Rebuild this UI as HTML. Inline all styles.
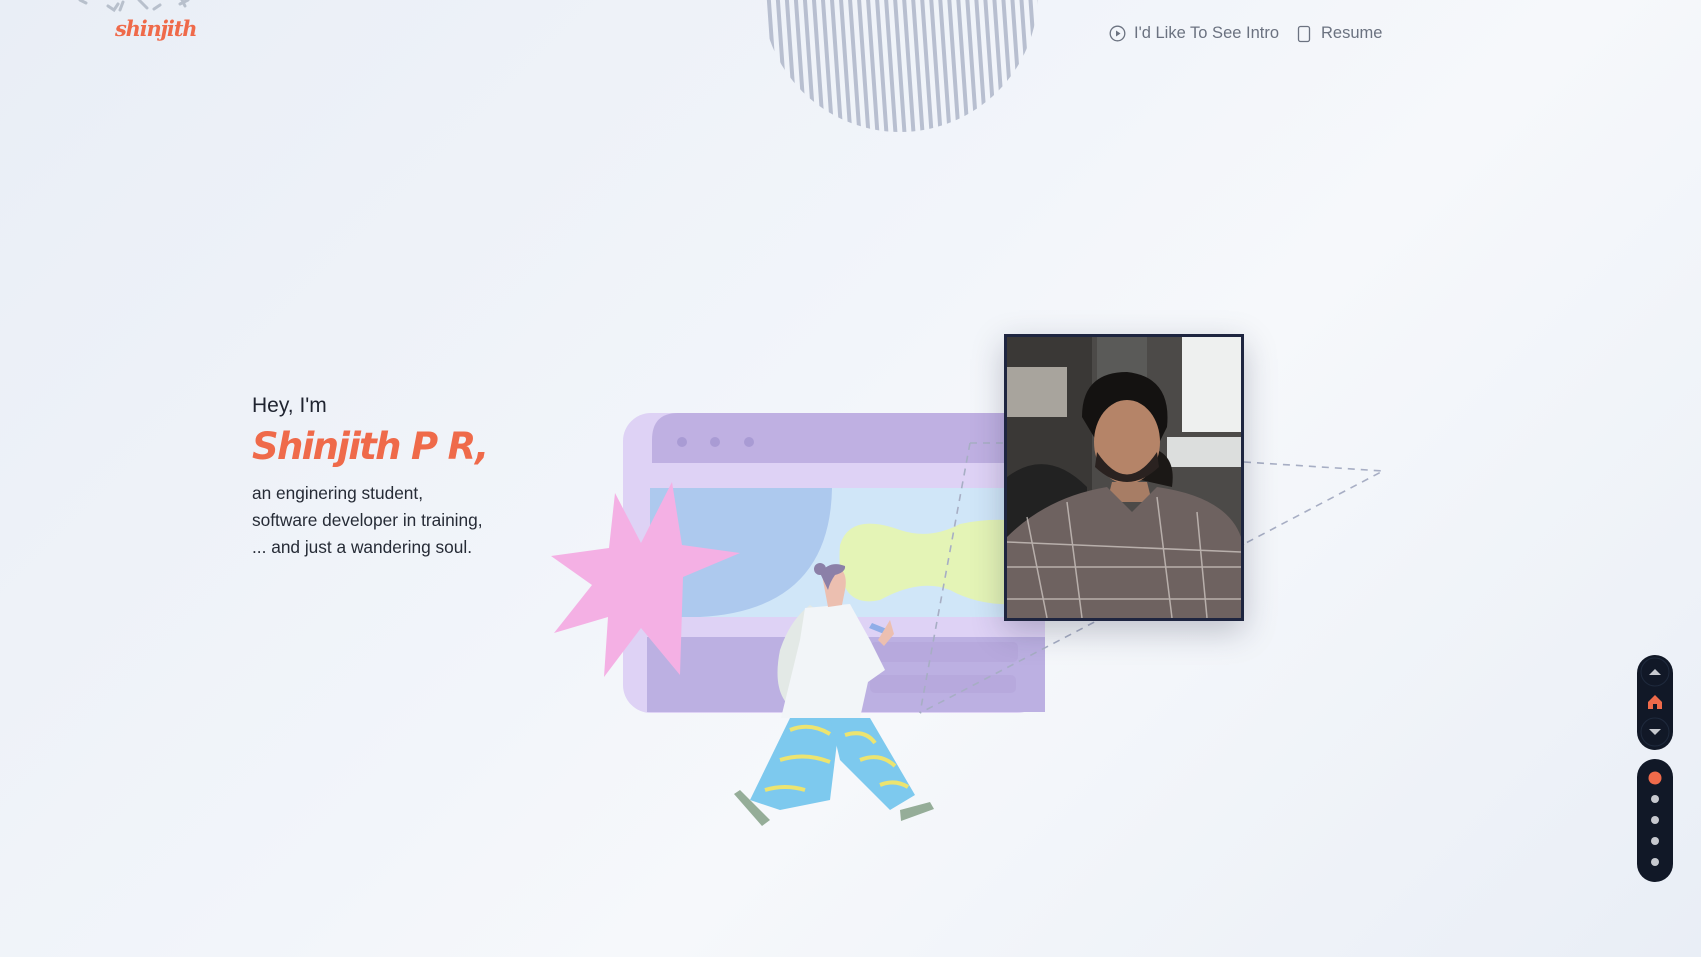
<!DOCTYPE html>
<html><head><meta charset="utf-8"><style>
html,body{margin:0;padding:0;width:1701px;height:957px;overflow:hidden;}
body{background:linear-gradient(135deg,#e9eef6 0%,#f2f5fa 45%,#f6f8fb 60%,#e9eef6 100%);font-family:"Liberation Sans","DejaVu Sans",sans-serif;position:relative;}
.logo{position:absolute;left:115px;top:16px;font-family:"DejaVu Serif","Liberation Serif",serif;font-style:italic;font-weight:bold;font-size:21px;color:#ef6a4a;letter-spacing:-1.2px}
.nav{position:absolute;top:24px;font-size:16.5px;color:#6b7280;display:flex;align-items:center;gap:8px}
.hey{position:absolute;left:252px;top:394px;font-size:21px;color:#1f2430}
.name{position:absolute;left:252px;top:425px;font-family:"DejaVu Sans",sans-serif;font-weight:bold;font-style:italic;font-size:37px;color:#ef6a4a;letter-spacing:-1.7px}
.body{position:absolute;left:252px;top:480px;font-size:17.3px;line-height:27px;color:#262b36}
.photo{position:absolute;left:1004px;top:334px;width:234px;height:281px;border:3px solid #1e2540;box-shadow:0 10px 30px rgba(30,37,64,.25);overflow:hidden;background:#5d5450}
.pill{position:absolute;left:1637px;width:36px;background:#111827;border-radius:18px}
</style></head><body>
<svg width="1701" height="957" style="position:absolute;left:0;top:0">
<defs>
<clipPath id="c"><circle cx="900" cy="-6" r="138"/></clipPath>
<pattern id="st" width="9" height="10" patternUnits="userSpaceOnUse" patternTransform="rotate(-4)"><rect width="4" height="10" fill="#b8bfd0"/></pattern>
</defs>
<rect x="760" y="-150" width="280" height="290" fill="url(#st)" clip-path="url(#c)"/>
<g stroke="#b8c0cc" stroke-width="3" fill="none" stroke-linecap="round">
<path d="M80 0l6 3M108 6l6 4 4-6M120 10l3-8M139 0l8 8M160 5l-6 4M180 4l8-4M182 0l3 6"/>
</g>
<rect x="623" y="413" width="422" height="300" rx="28" fill="#ded2f5"/>
<path d="M678 413H1045V463H652V440Q652 413 678 413Z" fill="#bfb0e2"/>
<rect x="650" y="488" width="395" height="129" fill="#d0e6f8"/>
<path d="M650 488H832Q830 610 700 617H650Z" fill="#adc9ee"/>
<path d="M840 545Q850 512 900 530Q930 540 960 524Q1000 515 1045 525V600Q990 612 950 590Q920 578 880 600Q835 610 840 545Z" fill="#e4f4b6"/>
<rect x="647" y="637" width="398" height="75" fill="#bcb0e2"/>
<rect x="870" y="642" width="148" height="20" rx="5" fill="#b7a9dd"/>
<rect x="870" y="675" width="146" height="18" rx="5" fill="#b7a9dd"/>
<circle cx="682" cy="442" r="5" fill="#a99bd4"/><circle cx="715" cy="442" r="5" fill="#a99bd4"/><circle cx="749" cy="442" r="5" fill="#a99bd4"/>
<path d="M672 482L682 545L740 553L683 577L680 675L641 628L604 677L608 617L554 633L592 585L551 556L609 548L615 493L641 543Z" fill="#f4b0e4"/>
<g stroke="#a7aec4" stroke-width="1.6" stroke-dasharray="7 6" fill="none">
<path d="M970 443L920 713M970 443H1004M1244 462L1383 471L1244 544M1244 544L920 713"/>
</g>
<path d="M810 605Q790 620 780 650Q770 700 800 713H860Q860 640 810 605Z" fill="#e3e9e6"/>
<path d="M805 608L850 604L870 640L885 670L868 682L860 718H781L800 640Z" fill="#f2f5f8"/>
<circle cx="820" cy="569" r="6" fill="#8b80a8"/>
<path d="M822 575Q825 565 840 568Q848 575 845 590L842 605L828 607Z" fill="#ecbfb0"/>
<path d="M820 573Q830 560 845 566Q846 572 835 575Q830 582 828 590Z" fill="#8b80a8"/>
<path d="M872 623l20 8l-3 5l-20-8Z" fill="#90aee8"/>
<path d="M878 640l12-20l4 14l-10 12Z" fill="#ecbfb0"/>
<path d="M790 718H840L830 800L780 810L750 800Z" fill="#7dc9ee"/>
<path d="M830 718H870L915 795L890 810L840 760Z" fill="#7dc9ee"/>
<g stroke="#ece470" stroke-width="4" fill="none"><path d="M790 730q20-8 40 4M780 760q25-8 50 2M765 790q20-6 40 0M845 735q20-6 30 8M860 760q20-8 35 6M880 785q15-6 28 2"/></g>
<path d="M740 790l30 30l-8 6l-28-32Z" fill="#95ad98"/>
<path d="M900 810l30-8l4 7l-33 12Z" fill="#95ad98"/>
</svg>
<div class="logo">shinjith</div>
<div class="nav" style="left:1109px"><svg width="17" height="17" viewBox="0 0 17 17"><circle cx="8.5" cy="8.5" r="7.3" fill="none" stroke="#6b7280" stroke-width="1.3"/><path d="M7 5.5L11.5 8.5L7 11.5Z" fill="#6b7280"/></svg><span>I'd Like To See Intro</span></div>
<div class="nav" style="left:1297px"><svg width="14" height="18" viewBox="0 0 14 18"><rect x="1.5" y="1.5" width="11" height="15" rx="2" fill="none" stroke="#6b7280" stroke-width="1.3"/></svg><span style="margin-left:2px">Resume</span></div>
<div class="hey">Hey, I'm</div>
<div class="name">Shinjith P R,</div>
<div class="body">an enginering student,<br>software developer in training,<br>... and just a wandering soul.</div>
<div class="photo">
<svg width="234" height="281" viewBox="0 0 234 281">
<rect width="234" height="281" fill="#4c4a48"/>
<rect x="0" y="0" width="85" height="230" fill="#3a3836"/>
<rect x="0" y="30" width="60" height="50" fill="#a8a49d"/>
<rect x="90" y="0" width="50" height="120" fill="#5a5a58"/>
<rect x="175" y="0" width="59" height="95" fill="#eef0ef"/>
<rect x="160" y="100" width="74" height="30" fill="#dcdedd"/>
<path d="M0 140Q40 110 80 150V230H0Z" fill="#222"/>
<path d="M120 140Q110 110 140 110Q170 115 165 150Z" fill="#1b1816"/>
<path d="M75 80Q75 35 120 35Q165 40 160 90L150 110L90 105Z" fill="#141211"/>
<ellipse cx="120" cy="105" rx="33" ry="42" fill="#b58468"/>
<path d="M90 115Q120 160 150 115L152 130Q120 160 88 130Z" fill="#2a2220"/>
<path d="M105 145H140L145 165H100Z" fill="#a77d65"/>
<path d="M0 281V200Q40 160 100 150L125 175L150 150Q220 160 234 200V281Z" fill="#6e6260"/>
<g stroke="#d8d0cc" stroke-width="1.5" opacity=".7"><path d="M20 180L40 281M60 165L75 281M150 160L165 281M190 175L200 281M0 230H234M0 262H234M0 205L234 215"/></g>
</svg>
</div>
<div class="pill" style="top:655px;height:95px">
<svg width="36" height="95" viewBox="0 0 36 95"><circle cx="18" cy="17" r="14" fill="none" stroke="#1f2a3d"/><path d="M12 20L18 14L24 20Z" fill="#c7c9cf"/><path d="M11 47L18 40L25 47V54H11Z" fill="#ef6a4a"/><rect x="16" y="49" width="4" height="5" fill="#111827"/><circle cx="18" cy="77" r="14" fill="none" stroke="#1f2a3d"/><path d="M12 74L18 80L24 74Z" fill="#c7c9cf"/></svg>
</div>
<div class="pill" style="top:759px;height:123px">
<svg width="36" height="123" viewBox="0 0 36 123"><circle cx="18" cy="19" r="6.5" fill="#ef6a4a"/><circle cx="18" cy="40" r="4" fill="#c7c9cf"/><circle cx="18" cy="61" r="4" fill="#c7c9cf"/><circle cx="18" cy="82" r="4" fill="#c7c9cf"/><circle cx="18" cy="103" r="4" fill="#c7c9cf"/></svg>
</div>
</body></html>
